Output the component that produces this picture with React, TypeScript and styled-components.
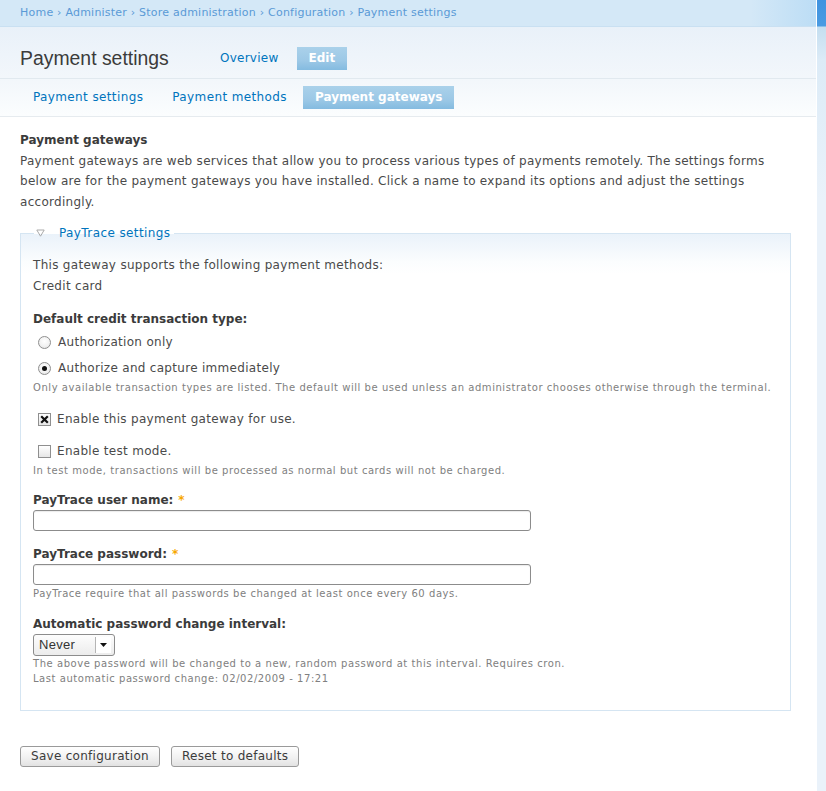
import React from "react";
import styled, { createGlobalStyle } from "styled-components";

const Global = createGlobalStyle`
  html, body {
    margin: 0;
    padding: 0;
    background: #fff;
  }
  body {
    font-family: "DejaVu Sans", Verdana, sans-serif;
    font-size: 12px;
    color: #4a4a4a;
    letter-spacing: 0.3px;
  }
`;

const Page = styled.div`
  display: flex;
  min-height: 100vh;
`;
const Main = styled.div`
  width: 816px;
  flex: none;
`;
const Edge = styled.div`
  width: 9px;
  margin-left: 1px;
  flex: none;
  background: linear-gradient(to bottom, #3f93e0 0, #4a9be2 26px, #c4def0 27px, #dcebf7 60px, #eaf2fa 200px);
`;

const Breadcrumb = styled.div`
  height: 26px;
  line-height: 26px;
  padding-left: 20px;
  font-size: 11px;
  color: #5a9ad6;
  letter-spacing: 0.22px;
  background: linear-gradient(to right, #d4e8f7 0, #d4e8f7 92%, #bcddf5 100%);
  border-bottom: 1px solid #c9e0f2;
`;

const Header = styled.div`
  background: linear-gradient(to bottom, #e9f1f9 0, #f3f7fb 55px, #fbfdfe 88px);
`;
const TitleRow = styled.div`
  display: flex;
  align-items: flex-end;
  box-sizing: border-box;
  height: 52px;
  padding: 0 0 8px 20px;
  border-bottom: 1px solid #e1e9ef;
`;
const Title = styled.h1`
  margin: 0;
  font-family: "Liberation Sans", Arial, sans-serif;
  font-weight: normal;
  font-size: 19.4px;
  letter-spacing: 0;
  color: #3b3b3b;
  width: 200px;
  line-height: 24px;
`;
const TabList = styled.div<{ $gap: number }>`
  display: flex;
  align-items: center;
  gap: ${(p) => p.$gap}px;
`;
const Tab = styled.span<{ $active?: boolean; $pad: number }>`
  display: inline-block;
  height: 23px;
  line-height: 23px;
  padding: 0 ${(p) => p.$pad}px;
  color: ${(p) => (p.$active ? "#fff" : "#0074bd")};
  font-weight: ${(p) => (p.$active ? "bold" : "normal")};
  background: ${(p) => (p.$active ? "linear-gradient(to bottom, #aad1ea 0, #9cc8e6 60%, #84bbe0 100%)" : "transparent")};
  letter-spacing: ${(p) => (p.$active ? "0" : "0.38px")};
`;
const SubRow = styled.div`
  display: flex;
  align-items: center;
  height: 37px;
  padding-left: 20px;
  border-bottom: 1px solid #e6ebef;
`;

const Content = styled.div`
  padding: 13px 25px 20px 20px;
  line-height: 20.5px;
`;
const Heading = styled.div`
  font-weight: bold;
  color: #3b3b3b;
  letter-spacing: 0;
`;
const Para = styled.p`
  margin: 0;
  letter-spacing: 0.28px;
`;

const Fieldset = styled.fieldset`
  margin: 12px 0 0 0;
  padding: 13px 13px 11px 12px;
  border: 1px solid #d5e5f2;
  background: linear-gradient(to bottom, #eaf2fa 0, #fbfdfe 28px, #fff 40px);
`;
const Legend = styled.legend`
  padding: 0 4px 0 2px;
  margin-left: 1px;
  color: #0074bd;
  display: flex;
  align-items: center;
  line-height: 18px;
  letter-spacing: 0.4px;
`;
const Toggle = styled.svg`
  margin-right: 14px;
`;
const Line = styled.div`
  line-height: 21px;
`;
const Label = styled.div`
  font-weight: bold;
  color: #3b3b3b;
  line-height: 20px;
  letter-spacing: 0;
`;
const Required = styled.span`
  color: #f7a700;
  margin-left: 5px;
  font-weight: bold;
`;
const Item = styled.div<{ $mt: number }>`
  margin-top: ${(p) => p.$mt}px;
`;
const Option = styled.div<{ $mt?: number }>`
  display: flex;
  align-items: center;
  height: 20px;
  margin-top: ${(p) => p.$mt ?? 0}px;
`;
const Radio = styled.span<{ $checked?: boolean }>`
  box-sizing: border-box;
  width: 13px;
  height: 13px;
  border-radius: 50%;
  border: 1px solid #8f8f8f;
  background: radial-gradient(circle at 50% 40%, #fff 0, #f2f2f2 55%, #dcdcdc 100%);
  display: flex;
  align-items: center;
  justify-content: center;
  margin: 0 7px 0 5px;
  &::after {
    content: "";
    display: ${(p) => (p.$checked ? "block" : "none")};
    width: 5px;
    height: 5px;
    border-radius: 50%;
    background: #111;
  }
`;
const Check = styled.span`
  box-sizing: border-box;
  width: 13px;
  height: 13px;
  border: 1px solid #8f8f8f;
  background: linear-gradient(to bottom, #fff 0, #e6e6e6 100%);
  margin: 0 6px 0 5px;
  display: flex;
  align-items: center;
  justify-content: center;
`;
const Desc = styled.div<{ $mt?: number }>`
  font-size: 10px;
  color: #808080;
  line-height: 15px;
  letter-spacing: 0.55px;
  margin-top: ${(p) => p.$mt ?? 0}px;
`;
const TextInput = styled.div`
  box-sizing: border-box;
  width: 498px;
  height: 21px;
  border: 1px solid #8c8c8c;
  border-radius: 3px;
  background: #fff;
  box-shadow: inset 0 1px 1px rgba(0, 0, 0, 0.08);
`;
const Select = styled.div`
  box-sizing: border-box;
  display: flex;
  align-items: center;
  width: 82px;
  height: 22px;
  border: 1px solid #8c8c8c;
  border-radius: 3px;
  background: linear-gradient(to bottom, #fdfdfd 0, #ececec 100%);
  font-family: "Liberation Sans", Arial, sans-serif;
  font-size: 13px;
  color: #333;
`;
const SelectValue = styled.span`
  flex: 1;
  padding-left: 5px;
  letter-spacing: 0.3px;
`;
const SelectArrow = styled.span`
  width: 15px;
  height: 16px;
  border-left: 1px solid #b5b5b5;
  margin-right: 3px;
  display: flex;
  align-items: center;
  justify-content: center;
  background: #fff;
`;
const Buttons = styled.div`
  display: flex;
  gap: 11px;
  margin-top: 35px;
`;
const Button = styled.button`
  box-sizing: border-box;
  height: 21px;
  padding: 0 10px;
  border: 1px solid #9a9a9a;
  border-radius: 3px;
  background: linear-gradient(to bottom, #fff 0, #f0f0f0 60%, #e2e2e2 100%);
  font-family: "DejaVu Sans", Verdana, sans-serif;
  font-size: 12px;
  color: #3b3b3b;
  line-height: 19px;
  letter-spacing: 0.28px;
`;

const crumbs = ["Home", "Administer", "Store administration", "Configuration", "Payment settings"];

export default function App() {
  return (
    <>
      <Global />
      <Page>
        <Main>
          <Breadcrumb>{crumbs.join(" › ")}</Breadcrumb>
          <Header>
            <TitleRow>
              <Title>Payment settings</Title>
              <TabList $gap={5}>
                <Tab $pad={0} style={{ marginRight: 13, letterSpacing: "0.25px" }}>Overview</Tab>
                <Tab $active $pad={12}>Edit</Tab>
              </TabList>
            </TitleRow>
            <SubRow>
              <TabList $gap={3}>
                <Tab $pad={13}>Payment settings</Tab>
                <Tab $pad={13}>Payment methods</Tab>
                <Tab $active $pad={12}>Payment gateways</Tab>
              </TabList>
            </SubRow>
          </Header>

          <Content>
            <Heading>Payment gateways</Heading>
            <Para>
              Payment gateways are web services that allow you to process various types of payments remotely. The settings forms
              below are for the payment gateways you have installed. Click a name to expand its options and adjust the settings
              accordingly.
            </Para>

            <Fieldset>
              <Legend>
                <Toggle width="9" height="8" viewBox="0 0 9 8">
                  <path d="M0.8 1 L8.2 1 L4.5 7.2 Z" fill="none" stroke="#aaa" strokeWidth="1" />
                </Toggle>
                PayTrace settings
              </Legend>
              <Line>This gateway supports the following payment methods:</Line>
              <Line>Credit card</Line>

              <Item $mt={12}>
                <Label>Default credit transaction type:</Label>
                <Option $mt={3}>
                  <Radio />
                  Authorization only
                </Option>
                <Option $mt={6}>
                  <Radio $checked />
                  Authorize and capture immediately
                </Option>
                <Desc $mt={2}>
                  Only available transaction types are listed. The default will be used unless an administrator chooses otherwise through the terminal.
                </Desc>
              </Item>

              <Item $mt={14}>
                <Option>
                  <Check>
                    <svg width="9" height="9" viewBox="0 0 9 9">
                      <path d="M1.2 1.2 L7.8 7.8 M7.8 1.2 L1.2 7.8" stroke="#111" strokeWidth="2.2" />
                    </svg>
                  </Check>
                  Enable this payment gateway for use.
                </Option>
              </Item>

              <Item $mt={12}>
                <Option>
                  <Check />
                  Enable test mode.
                </Option>
                <Desc $mt={2}>In test mode, transactions will be processed as normal but cards will not be charged.</Desc>
              </Item>

              <Item $mt={12}>
                <Label>
                  PayTrace user name:<Required>*</Required>
                </Label>
                <TextInput />
              </Item>

              <Item $mt={13}>
                <Label>
                  PayTrace password:<Required>*</Required>
                </Label>
                <TextInput />
                <Desc $mt={1}>PayTrace require that all passwords be changed at least once every 60 days.</Desc>
              </Item>

              <Item $mt={13}>
                <Label>Automatic password change interval:</Label>
                <Select>
                  <SelectValue>Never</SelectValue>
                  <SelectArrow>
                    <svg width="7" height="4" viewBox="0 0 7 4">
                      <path d="M0 0 L7 0 L3.5 4 Z" fill="#111" />
                    </svg>
                  </SelectArrow>
                </Select>
                <Desc>The above password will be changed to a new, random password at this interval. Requires cron.</Desc>
                <Desc>Last automatic password change: 02/02/2009 - 17:21</Desc>
              </Item>
              <div style={{ height: 13 }} />
            </Fieldset>

            <Buttons>
              <Button>Save configuration</Button>
              <Button>Reset to defaults</Button>
            </Buttons>
          </Content>
        </Main>
        <Edge />
      </Page>
    </>
  );
}
